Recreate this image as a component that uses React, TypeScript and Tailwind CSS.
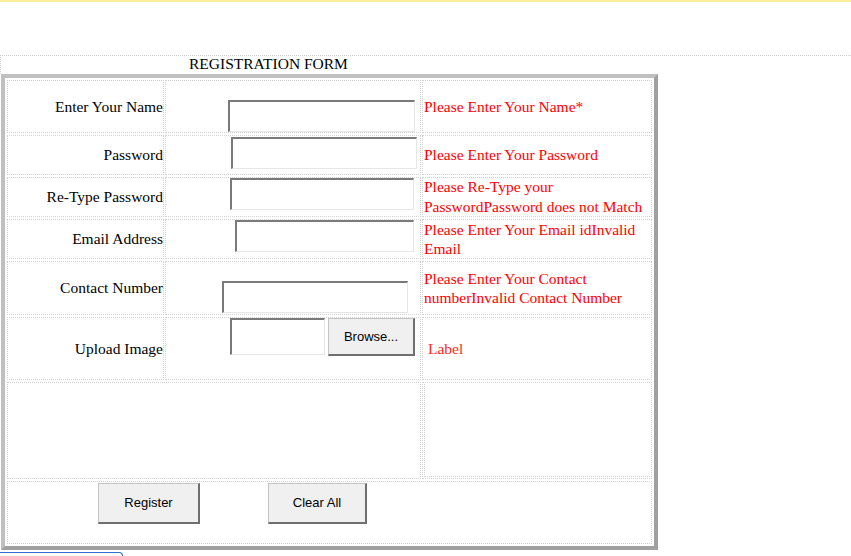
import React from "react";

type Row = {
  label: string;
  height: string;
  input: string;
  message: string;
  leading: string;
};

const rows: Row[] = [
  {
    label: "Enter Your Name",
    height: "h-[53px]",
    input: "ml-[62px] mt-[19px] w-[187px]",
    message: "Please Enter Your Name*",
    leading: "leading-[20px]",
  },
  {
    label: "Password",
    height: "h-[40px]",
    input: "ml-[65px] mt-[1px] w-[186px]",
    message: "Please Enter Your Password",
    leading: "leading-[20px]",
  },
  {
    label: "Re-Type Password",
    height: "h-[40px]",
    input: "ml-[64px] mt-0 w-[184px]",
    message: "Please Re-Type your PasswordPassword does not Match",
    leading: "leading-[20px]",
  },
  {
    label: "Email Address",
    height: "h-[40px]",
    input: "ml-[69px] mt-0 w-[179px]",
    message: "Please Enter Your Email idInvalid Email",
    leading: "leading-[19px]",
  },
  {
    label: "Contact Number",
    height: "h-[54px]",
    input: "ml-[56px] mt-[19px] w-[186px]",
    message: "Please Enter Your Contact numberInvalid Contact Number",
    leading: "leading-[19px]",
  },
];

const cell = "border border-dotted border-[#d2d2d2]";
const inputBox =
  "block h-[32px] border-t-2 border-l-2 border-r border-b border-t-[#7a7a7a] border-l-[#7a7a7a] border-r-[#e6e6e6] border-b-[#e6e6e6] bg-white";
const button =
  "h-[41px] border border-t-[#c4c4c4] border-l-[#c4c4c4] border-r-2 border-b-2 border-r-[#6f6f6f] border-b-[#6f6f6f] bg-[#f0f0f0] font-['Liberation_Sans',Arial,sans-serif] text-[13px] text-black";

export default function App() {
  return (
    <div className="relative h-[556px] w-[851px] overflow-hidden bg-white font-['Liberation_Serif','Times_New_Roman',serif] text-[15.5px] text-black">
      <div className="h-[2px] bg-[#fbef9c]" />

      <div className="mt-[53px] h-[19px] border-t border-l border-dotted border-[#d2d2d2] pl-[188px] leading-[16px]">
        REGISTRATION FORM
      </div>

      <div className="ml-[1px] w-[657px] border-4 border-t-[#c0c0c0] border-l-[#c0c0c0] border-r-[#a0a0a0] border-b-[#a0a0a0] pt-[2px] pb-[2px] pl-[2px]">
        <div className="flex flex-col gap-[2px]">
          {rows.map((row) => (
            <div
              key={row.label}
              className={`flex min-h-0 shrink-0 gap-[1px] overflow-hidden ${row.height}`}
            >
              <div className={`${cell} flex w-[157px] items-center justify-end`}>
                {row.label}
              </div>
              <div className={`${cell} w-[256px]`}>
                <input type="text" className={`${inputBox} ${row.input}`} />
              </div>
              <div
                className={`${cell} flex w-[230px] items-center pl-[1px] text-[#ff0000] ${row.leading}`}
              >
                {row.message}
              </div>
            </div>
          ))}

          <div className="flex h-[63px] min-h-0 shrink-0 gap-[1px] overflow-hidden">
            <div className={`${cell} flex w-[157px] items-center justify-end pt-[1px]`}>
              Upload Image
            </div>
            <div className={`${cell} flex w-[256px] items-start gap-[3px] pl-[64px]`}>
              <div className={`${inputBox} !h-[37px] w-[95px]`} />
              <button className={`${button} !h-[38px] w-[87px]`}>Browse...</button>
            </div>
            <div className={`${cell} flex w-[230px] items-center pl-[5px] pt-[1px] text-[#ff2a1a]`}>
              Label
            </div>
          </div>

          <div className="flex h-[97px] min-h-0 shrink-0 gap-[1px] overflow-hidden">
            <div className={`${cell} w-[414px]`} />
            <div className={`${cell} w-[230px] pt-[1px]`}>
              <div className={`${cell} ml-[1px] h-[93px] w-[228px] border-r-0 border-t-0`} />
            </div>
          </div>

          <div className={`${cell} flex h-[63px] w-[645px] shrink-0 items-start pt-[1px]`}>
            <button className={`${button} ml-[90px] w-[102px]`}>Register</button>
            <button className={`${button} ml-[68px] w-[99px]`}>Clear All</button>
          </div>
        </div>
      </div>

      <div className="mt-[2px] h-[8px] w-[123px] rounded-tr-[4px] border-t border-r border-[#2f6fd0]" />
    </div>
  );
}
